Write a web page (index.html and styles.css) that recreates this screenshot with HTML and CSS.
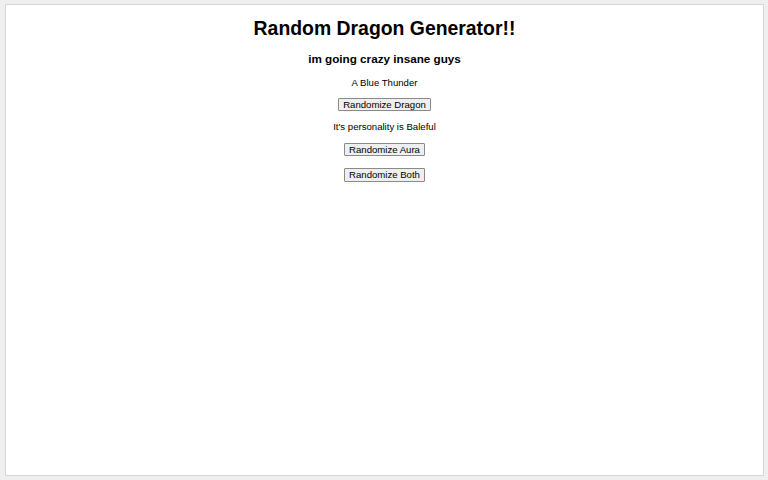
FILE: index.html
```html
<!DOCTYPE html>
<html lang="en">

<head>
    <meta charset="UTF-8">
    <meta name="viewport" content="width=device-width, initial-scale=1.0">
    <title>Random Dragon Generator</title>
    <link rel="stylesheet" href="styles.css">
</head>

<body>
    <div class="page">
        <h1>Random Dragon Generator!!</h1>
        <h3>im going crazy insane guys</h3>
        <p class="dragon">A Blue Thunder</p>
        <div class="row"><button class="btn-dragon">Randomize Dragon</button></div>
        <p class="aura">It's personality is Baleful</p>
        <div class="row aura-row"><button class="btn-aura">Randomize Aura</button></div>
        <div class="row both"><button class="btn-both">Randomize Both</button></div>
    </div>
    <script>
        var colors = ['Red', 'Blue', 'Green', 'Black', 'Gold', 'Silver'];
        var kinds = ['Thunder', 'Fire', 'Frost', 'Shadow', 'Storm'];
        var auras = ['Baleful', 'Noble', 'Cunning', 'Gentle', 'Wrathful'];
        var dragon = document.querySelector('.dragon');
        var aura = document.querySelector('.aura');

        function pick(list) {
            return list[Math.floor(Math.random() * list.length)];
        }
        function newDragon() {
            dragon.innerHTML = 'A ' + pick(colors) + ' ' + pick(kinds);
        }
        function newAura() {
            aura.innerHTML = "It's personality is " + pick(auras);
        }
        document.querySelector('.btn-dragon').addEventListener('click', newDragon);
        document.querySelector('.btn-aura').addEventListener('click', newAura);
        document.querySelector('.btn-both').addEventListener('click', function () {
            newDragon();
            newAura();
        })
    </script>
</body>

</html>
```
FILE: styles.css
```css
* {
    box-sizing: border-box;
}

html {
    background-color: #efefef;
}

body {
    margin: 0;
    padding: 4px 4px 4px 5px;
    font-family: "Liberation Sans", Arial, sans-serif;
    font-size: 9.6px;
    color: #000;
}

.page {
    display: flow-root;
    height: 472px;
    background-color: #fff;
    border: 1px solid #d6d6d6;
    text-align: center;
}

h1 {
    margin: 12px 0;
    font-size: 19.4px;
}

h3 {
    margin: 12px 0;
    font-size: 11.7px;
}

p {
    margin: 9.6px 0;
}

.row {
    margin: 9.6px 0;
}

.row.aura-row {
    margin-top: 11px;
}

.row.both {
    margin-top: 12px;
}

button {
    padding: 0 4px;
    font-family: "Liberation Sans", Arial, sans-serif;
    font-size: 9.6px;
    line-height: 11.5px;
    color: #000;
    background-color: #efefef;
    border: 1px solid #8a8a8a;
    border-radius: 1px;
    cursor: pointer;
}
```
